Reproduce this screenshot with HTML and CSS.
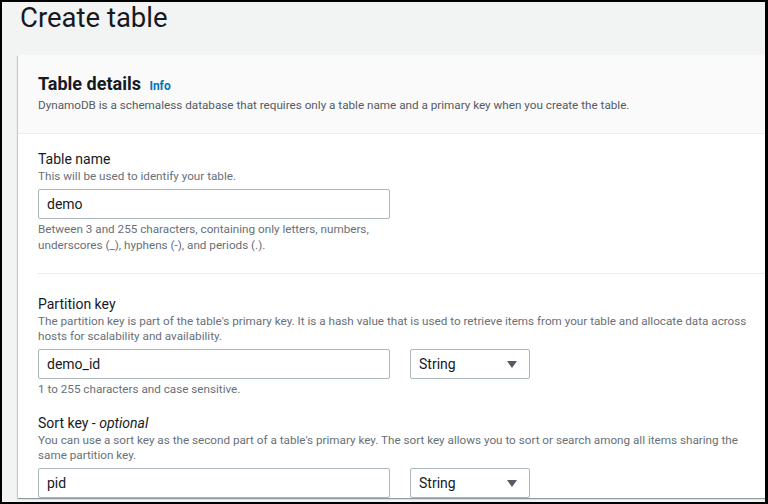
FILE: index.html
```html
<!DOCTYPE html>
<html lang="en">
<head>
<meta charset="utf-8">
<title>Create table</title>
<link rel="stylesheet" href="styles.css">
</head>
<body>
<div class="frame">
  <h1 class="page-title">Create table</h1>
  <section class="card">
    <header class="card-header">
      <h2 class="card-title">Table details <a class="info" href="#">Info</a></h2>
      <p class="card-desc">DynamoDB is a schemaless database that requires only a table name and a primary key when you create the table.</p>
    </header>
    <div class="card-body">
      <div class="field">
        <div class="label">Table name</div>
        <div class="desc">This will be used to identify your table.</div>
        <div class="row">
          <div class="input wide">demo</div>
        </div>
        <div class="hint">Between 3 and 255 characters, containing only letters, numbers,<br>underscores (_), hyphens (-), and periods (.).</div>
      </div>
      <div class="divider"></div>
      <div class="field">
        <div class="label">Partition key</div>
        <div class="desc">The partition key is part of the table's primary key. It is a hash value that is used to retrieve items from your table and allocate data across<br>hosts for scalability and availability.</div>
        <div class="row">
          <div class="input wide">demo_id</div>
          <div class="input select">String<span class="caret"></span></div>
        </div>
        <div class="hint">1 to 255 characters and case sensitive.</div>
      </div>
      <div class="field sort">
        <div class="label">Sort key - <i>optional</i></div>
        <div class="desc">You can use a sort key as the second part of a table's primary key. The sort key allows you to sort or search among all items sharing the<br>same partition key.</div>
        <div class="row">
          <div class="input wide">pid</div>
          <div class="input select">String<span class="caret"></span></div>
        </div>
      </div>
    </div>
  </section>
</div>
</body>
</html>
```

FILE: styles.css
```css
html, body {
  margin: 0;
  padding: 0;
}
body {
  font-family: Roboto, "Liberation Sans", Arial, sans-serif;
  color: #16191f;
}
.frame {
  width: 768px;
  height: 504px;
  box-sizing: border-box;
  border-style: solid;
  border-color: #000;
  border-width: 2px 3px 2px 2px;
  background: #f2f3f3;
  overflow: hidden;
}
.page-title {
  margin: 0;
  padding: 0 0 0 18px;
  font-size: 27.5px;
  font-weight: 400;
  line-height: 32px;
  height: 53px;
  color: #16191f;
}
.card {
  margin-left: 16px;
  margin-right: -60px;
  background: #fff;
  box-shadow: 0 1px 1px 0 rgba(0, 28, 36, 0.3), -1px 1px 1px 0 rgba(0, 28, 36, 0.15);
}
.card-header {
  background: #fafafa;
  border-bottom: 1px solid #eaeded;
  padding: 18px 20px 20px;
}
.card-title {
  margin: 0;
  font-size: 18px;
  font-weight: 700;
  line-height: 22px;
}
.info {
  font-size: 12px;
  font-weight: 700;
  color: #0073bb;
  text-decoration: none;
  margin-left: 4px;
}
.card-desc {
  margin: 0;
  font-size: 11.7px;
  line-height: 16px;
  color: #545b64;
}
.card-body {
  padding: 15px 20px 0;
}
.label {
  font-size: 14px;
  line-height: 20px;
  color: #16191f;
}
.desc {
  font-size: 11.7px;
  line-height: 15px;
  color: #687078;
  white-space: nowrap;
}
.row {
  display: flex;
  gap: 20px;
  margin-top: 5px;
}
.input {
  box-sizing: border-box;
  height: 30px;
  border: 1px solid #aab7b8;
  border-radius: 2px;
  background: #fff;
  font-size: 14px;
  line-height: 28px;
  padding: 0 8px;
  color: #16191f;
}
.wide {
  width: 352px;
}
.select {
  width: 120px;
  position: relative;
}
.caret {
  position: absolute;
  right: 12px;
  top: 11px;
  width: 0;
  height: 0;
  border-left: 5px solid transparent;
  border-right: 5px solid transparent;
  border-top: 7px solid #545b64;
}
.hint {
  margin-top: 2px;
  font-size: 11.7px;
  line-height: 16px;
  color: #687078;
}
.divider {
  height: 1px;
  background: #eaeded;
  margin: 20px -60px 20px 0;
}
.sort {
  margin-top: 16px;
}
```
